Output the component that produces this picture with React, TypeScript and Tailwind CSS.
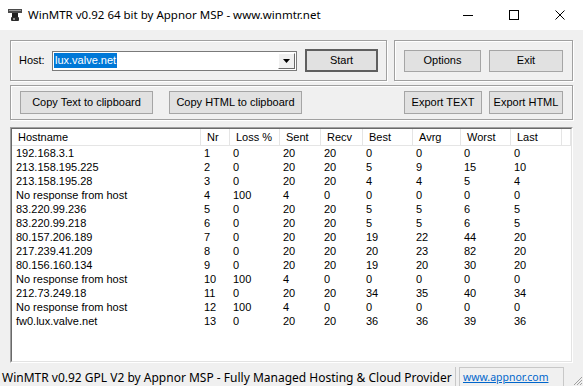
import React from "react";

const rows: (string | number)[][] = [
  ["192.168.3.1", 1, 0, 20, 20, 0, 0, 0, 0],
  ["213.158.195.225", 2, 0, 20, 20, 5, 9, 15, 10],
  ["213.158.195.28", 3, 0, 20, 20, 4, 4, 5, 4],
  ["No response from host", 4, 100, 4, 0, 0, 0, 0, 0],
  ["83.220.99.236", 5, 0, 20, 20, 5, 5, 6, 5],
  ["83.220.99.218", 6, 0, 20, 20, 5, 5, 6, 5],
  ["80.157.206.189", 7, 0, 20, 20, 19, 22, 44, 20],
  ["217.239.41.209", 8, 0, 20, 20, 20, 23, 82, 20],
  ["80.156.160.134", 9, 0, 20, 20, 19, 20, 30, 20],
  ["No response from host", 10, 100, 4, 0, 0, 0, 0, 0],
  ["212.73.249.18", 11, 0, 20, 20, 34, 35, 40, 34],
  ["No response from host", 12, 100, 4, 0, 0, 0, 0, 0],
  ["fw0.lux.valve.net", 13, 0, 20, 20, 36, 36, 39, 36],
];

const headers = ["Hostname", "Nr", "Loss %", "Sent", "Recv", "Best", "Avrg", "Worst", "Last"];
const widths = [
  "w-[189px]",
  "w-[29px]",
  "w-[50px]",
  "w-[41px]",
  "w-[42px]",
  "w-[50px]",
  "w-[48px]",
  "w-[50px]",
  "w-[51px]",
];

const sans = { fontFamily: '"Liberation Sans", Arial, sans-serif' };
const ui = { fontFamily: '"Noto Sans", "Open Sans", sans-serif' };

function Btn({
  children,
  className = "",
  def = false,
}: {
  children: React.ReactNode;
  className?: string;
  def?: boolean;
}) {
  return (
    <div
      className={
        "flex items-center justify-center bg-[#e1e1e1] text-[11px] text-black " +
        (def ? "border-2 border-[#5f5f5f] " : "border border-[#a5a5a5] ") +
        className
      }
    >
      {children}
    </div>
  );
}

function Group({ children, className = "" }: { children: React.ReactNode; className?: string }) {
  return (
    <div
      className={
        "flex items-center border border-[#a0a0a0] shadow-[1px_1px_0_#ffffff,inset_1px_1px_0_#ffffff] " +
        className
      }
    >
      {children}
    </div>
  );
}

function TitleIcon() {
  return (
    <svg width="16" height="16" viewBox="0 0 16 16">
      <rect x="1" y="2" width="14" height="4" fill="#4a4a4a" />
      <rect x="2" y="3" width="12" height="1" fill="#9a9a9a" />
      <rect x="5" y="6" width="6" height="5" fill="#1e1e1e" />
      <rect x="4" y="10" width="8" height="4" rx="1" fill="#2a2a2a" />
      <rect x="6" y="11" width="2" height="2" fill="#8a8a8a" />
    </svg>
  );
}

export default function App() {
  return (
    <div className="w-[583px] h-[386px] bg-[#f0f0f0] flex flex-col overflow-hidden" style={sans}>
      {/* Title bar */}
      <div className="h-[30px] bg-white flex items-center shrink-0">
        <div className="ml-[7px] w-[16px] h-[16px]">
          <TitleIcon />
        </div>
        <div className="ml-[5px] text-[11.5px] text-black whitespace-nowrap" style={ui}>
          WinMTR v0.92 64 bit by Appnor MSP - www.winmtr.net
        </div>
        <div className="flex-1" />
        <div className="w-[46px] h-[30px] flex items-center justify-center">
          <div className="w-[10px] h-px bg-black" />
        </div>
        <div className="w-[46px] h-[30px] flex items-center justify-center">
          <div className="w-[10px] h-[10px] border border-black" />
        </div>
        <div className="w-[46px] h-[30px] flex items-center justify-center">
          <svg width="10" height="10" viewBox="0 0 10 10">
            <path d="M0.5 0.5 L9.5 9.5 M9.5 0.5 L0.5 9.5" stroke="#000" strokeWidth="1" />
          </svg>
        </div>
      </div>

      {/* Body */}
      <div className="flex flex-col px-[10px] pt-[10px] shrink-0">
        <div className="flex gap-[7px] h-[41px]">
          <Group className="w-[377px] pl-[8px]">
            <div className="w-[33px] text-[11px] text-black">Host:</div>
            <div className="w-[245px] h-[20px] bg-white border border-[#7a7a7a] flex items-center pl-[1px] pr-[1px]">
              <div className="flex-1 flex items-center">
                <span className="bg-[#0078d7] text-white text-[11px] leading-[15px] px-px">lux.valve.net</span>
              </div>
              <div className="w-[17px] h-[16px] bg-[#f0f0f0] border-t border-l border-t-[#ffffff] border-l-[#ffffff] border-r border-b border-r-[#696969] border-b-[#696969] flex items-center justify-center">
                <svg width="7" height="4" viewBox="0 0 7 4">
                  <path d="M0 0 H7 L3.5 4 Z" fill="#000" />
                </svg>
              </div>
            </div>
            <Btn def className="ml-[8px] w-[73px] h-[23px]">
              Start
            </Btn>
          </Group>
          <Group className="w-[179px] pl-[9px] gap-[8px]">
            <Btn className="w-[77px] h-[22px]">Options</Btn>
            <Btn className="w-[74px] h-[22px]">Exit</Btn>
          </Group>
        </div>

        <Group className="mt-[4px] h-[35px] pl-[9px] pr-[9px]">
          <Btn className="w-[133px] h-[23px]">Copy Text to clipboard</Btn>
          <Btn className="ml-[16px] w-[133px] h-[23px]">Copy HTML to clipboard</Btn>
          <div className="flex-1" />
          <Btn className="w-[78px] h-[23px]">Export TEXT</Btn>
          <Btn className="ml-[7px] w-[74px] h-[23px]">Export HTML</Btn>
        </Group>

        {/* Table */}
        <div className="mt-[7px] h-[236px] border border-t-[#a0a0a0] border-l-[#a0a0a0] border-r-[#ffffff] border-b-[#ffffff]">
          <div className="h-full border border-t-[#696969] border-l-[#696969] border-r-[#e3e3e3] border-b-[#e3e3e3] bg-white flex flex-col">
            <div className="flex h-[17px] border-b border-[#e5e5e5] shrink-0">
              {headers.map((h, i) => (
                <div
                  key={h}
                  className={widths[i] + " h-full border-r border-[#e5e5e5] pl-[6px] text-[11px] leading-[16px] text-black whitespace-nowrap"}
                >
                  {h}
                </div>
              ))}
              <div className="w-[9px] h-full border-r border-[#e5e5e5]" />
            </div>
            {rows.map((r, ri) => (
              <div key={ri} className="flex h-[14px]">
                {r.map((c, ci) => (
                  <div
                    key={ci}
                    className={
                      widths[ci] +
                      (ci === 0 ? " pl-[4px]" : " pl-[3px]") +
                      " text-[11px] leading-[14px] text-black whitespace-nowrap"
                    }
                  >
                    {c}
                  </div>
                ))}
              </div>
            ))}
          </div>
        </div>
      </div>

      {/* Status bar */}
      <div className="flex-1 flex items-end">
        <div className="w-[456px] h-[19px] flex items-center pl-[2px] pt-[2px] border-r border-[#c8c8c8] text-[12px] text-black whitespace-nowrap overflow-hidden" style={ui}>
          WinMTR v0.92 GPL V2 by Appnor MSP - Fully Managed Hosting &amp; Cloud Provider
        </div>
        <div className="ml-[3px] w-[105px] h-[19px] flex items-center pl-[3px] pt-[2px] border-t border-l border-r border-[#c8c8c8] text-[10.5px] text-[#0066cc] underline whitespace-nowrap" style={ui}>
          www.appnor.com
        </div>
        <div className="flex-1 h-[19px] flex items-end justify-end">
          <svg width="11" height="11" viewBox="0 0 11 11">
            <path d="M10 2 L2 10 M10 5 L5 10 M10 8 L8 10" stroke="#a0a0a0" strokeWidth="1" />
          </svg>
        </div>
      </div>
    </div>
  );
}
